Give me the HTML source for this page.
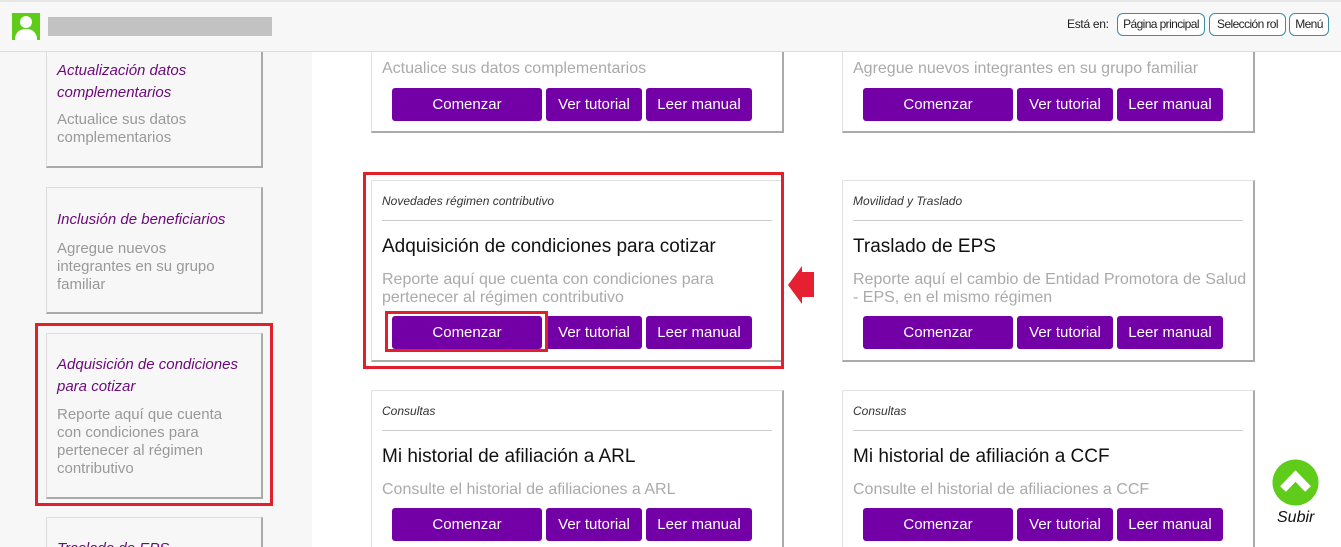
<!DOCTYPE html>
<html><head><meta charset="utf-8">
<style>
*{margin:0;padding:0;box-sizing:border-box}
html,body{width:1341px;height:547px;overflow:hidden}
body{background:#fff;font-family:"Liberation Sans",sans-serif;position:relative}
.abs{position:absolute}
#hdr{left:0;top:0;width:1341px;height:52px;background:#f7f7f7;border-bottom:1px solid #ddd;border-top:2px solid #e6e6e6;z-index:5}
#side{left:0;top:52px;width:312px;height:495px;background:#f7f7f7}
.sc{position:absolute;left:46px;width:217px;background:#f7f7f7;border:1px solid #ddd;border-right:2px solid #aaa;border-bottom:2px solid #aaa;padding:0 10px;overflow:hidden}
.st{color:#6b0a7a;font-style:italic;font-size:15px;line-height:22px}
.sd{color:#999;font-size:15px;line-height:18px}
.card{position:absolute;width:413px;background:#fff;border:1px solid #e2e2e2;border-right:2px solid #aaa;border-bottom:2px solid #aaa;overflow:hidden}
.cat{position:absolute;left:10px;font-size:12px;font-style:italic;color:#333}
.hr{position:absolute;left:10px;right:10px;height:1px;background:#ccc}
.ttl{position:absolute;left:10px;font-size:19px;color:#111;white-space:nowrap}
.ds{position:absolute;left:10px;font-size:16px;line-height:18px;color:#aaa;width:395px}
.b{position:absolute;height:33px;background:#7300a6;color:#fff;font-size:15px;line-height:33px;text-align:center;border-radius:3px}
.red{position:absolute;border:3px solid #e0202a}
.pill{position:absolute;top:11px;height:23px;border:1px solid #3a8ea0;border-radius:6px;font-size:12px;line-height:21px;letter-spacing:-.6px;color:#222;text-align:center;background:#fff}
</style></head><body>
<div id="hdr" class="abs">
  <div class="abs" style="left:12px;top:11px;width:28px;height:27px;background:#5fcc1a;overflow:hidden">
    <div class="abs" style="left:8px;top:3px;width:12px;height:12px;border-radius:50%;background:#fff"></div>
    <div class="abs" style="left:3px;top:16px;width:22px;height:16px;border-radius:10px 10px 0 0;background:#fff"></div>
  </div>
  <div class="abs" style="left:48px;top:15px;width:224px;height:19px;background:#c2c2c2"></div>
  <div class="abs" style="left:1067px;top:15px;font-size:12px;color:#222;letter-spacing:-.3px">Está en:</div>
  <div class="pill" style="left:1117px;width:88px">Página principal</div>
  <div class="pill" style="left:1209px;width:77px">Selección rol</div>
  <div class="pill" style="left:1289px;width:40px">Menú</div>
</div>
<div id="side" class="abs"></div>
<div class="sc" style="top:40px;height:128px"><div class="st" style="margin-top:19px">Actualización datos<br>complementarios</div><div class="sd" style="margin-top:7px">Actualice sus datos<br>complementarios</div></div>
<div class="sc" style="top:187px;height:127px"><div class="st" style="margin-top:21px">Inclusión de beneficiarios</div><div class="sd" style="margin-top:9px">Agregue nuevos<br>integrantes en su grupo<br>familiar</div></div>
<div class="sc" style="top:333px;height:166px"><div class="st" style="margin-top:20px">Adquisición de condiciones<br>para cotizar</div><div class="sd" style="margin-top:8px">Reporte aquí que cuenta<br>con condiciones para<br>pertenecer al régimen<br>contributivo</div></div>
<div class="sc" style="top:517px;height:30px;border-bottom:0"><div class="st" style="margin-top:20px">Traslado de EPS</div></div>
<div class="red" style="left:35px;top:323px;width:238px;height:183px"></div>

<div class="card" style="left:371px;top:20px;height:113px">
 <div class="ds" style="top:39px">Actualice sus datos complementarios</div>
 <div class="b" style="left:20px;top:67px;width:150px">Comenzar</div><div class="b" style="left:174px;top:67px;width:96px">Ver tutorial</div><div class="b" style="left:274px;top:67px;width:106px">Leer manual</div>
</div>
<div class="card" style="left:842px;top:20px;height:113px">
 <div class="ds" style="top:39px">Agregue nuevos integrantes en su grupo familiar</div>
 <div class="b" style="left:20px;top:67px;width:150px">Comenzar</div><div class="b" style="left:174px;top:67px;width:96px">Ver tutorial</div><div class="b" style="left:274px;top:67px;width:106px">Leer manual</div>
</div>
<div class="card" style="left:371px;top:180px;height:182px">
 <div class="cat" style="top:13px">Novedades régimen contributivo</div><div class="hr" style="top:39px"></div>
 <div class="ttl" style="top:55px">Adquisición de condiciones para cotizar</div>
 <div class="ds" style="top:90px">Reporte aquí que cuenta con condiciones para<br>pertenecer al régimen contributivo</div>
 <div class="b" style="left:20px;top:135px;width:150px">Comenzar</div><div class="b" style="left:174px;top:135px;width:96px">Ver tutorial</div><div class="b" style="left:274px;top:135px;width:106px">Leer manual</div>
</div>
<div class="card" style="left:842px;top:180px;height:182px">
 <div class="cat" style="top:13px">Movilidad y Traslado</div><div class="hr" style="top:39px"></div>
 <div class="ttl" style="top:55px">Traslado de EPS</div>
 <div class="ds" style="top:90px">Reporte aquí el cambio de Entidad Promotora de Salud<br>- EPS, en el mismo régimen</div>
 <div class="b" style="left:20px;top:135px;width:150px">Comenzar</div><div class="b" style="left:174px;top:135px;width:96px">Ver tutorial</div><div class="b" style="left:274px;top:135px;width:106px">Leer manual</div>
</div>
<div class="card" style="left:371px;top:390px;height:157px;border-bottom:0">
 <div class="cat" style="top:13px">Consultas</div><div class="hr" style="top:39px"></div>
 <div class="ttl" style="top:55px">Mi historial de afiliación a ARL</div>
 <div class="ds" style="top:90px">Consulte el historial de afiliaciones a ARL</div>
 <div class="b" style="left:20px;top:117px;width:150px">Comenzar</div><div class="b" style="left:174px;top:117px;width:96px">Ver tutorial</div><div class="b" style="left:274px;top:117px;width:106px">Leer manual</div>
</div>
<div class="card" style="left:842px;top:390px;height:157px;border-bottom:0">
 <div class="cat" style="top:13px">Consultas</div><div class="hr" style="top:39px"></div>
 <div class="ttl" style="top:55px">Mi historial de afiliación a CCF</div>
 <div class="ds" style="top:90px">Consulte el historial de afiliaciones a CCF</div>
 <div class="b" style="left:20px;top:117px;width:150px">Comenzar</div><div class="b" style="left:174px;top:117px;width:96px">Ver tutorial</div><div class="b" style="left:274px;top:117px;width:106px">Leer manual</div>
</div>
<div class="red" style="left:363px;top:172px;width:421px;height:197px"></div>
<div class="red" style="left:385px;top:311px;width:163px;height:41px"></div>
<svg class="abs" style="left:785px;top:262px" width="32" height="46"><polygon points="3,23 17,4 17,10 29,10 29,35 17,35 17,42" fill="#e62030"/></svg>

<svg class="abs" style="left:1272px;top:459px" width="47" height="47"><circle cx="23.5" cy="23.5" r="23" fill="#5fcc1a"/><polyline points="11,30 23.5,17 36,30" fill="none" stroke="#fff" stroke-width="8"/></svg>
<div class="abs" style="left:1277px;top:509px;font-size:16px;font-style:italic;color:#111">Subir</div>
</body></html>
